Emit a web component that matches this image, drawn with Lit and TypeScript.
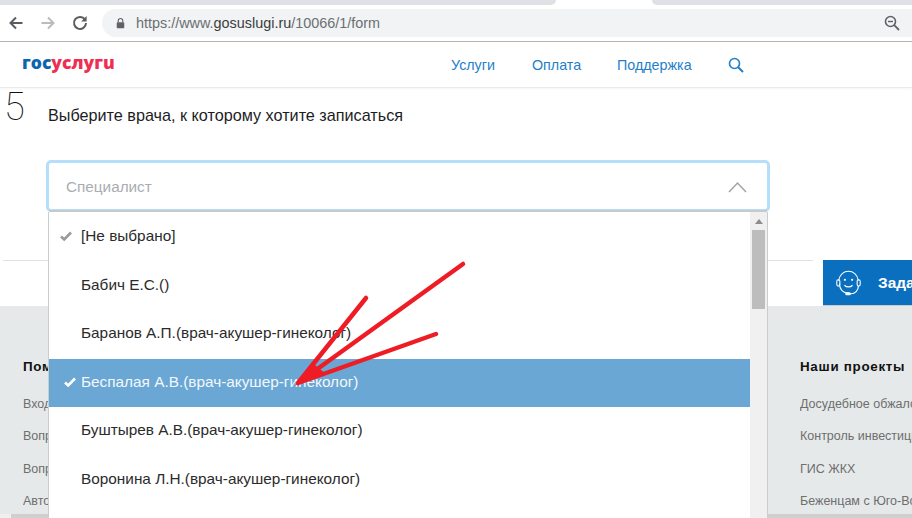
import { LitElement, html, css, svg } from "lit";
import { customElement } from "lit/decorators.js";

const rows = [
  { t: "[Не выбрано]", mark: "grey" },
  { t: "Бабич Е.С.()" },
  { t: "Баранов А.П.(врач-акушер-гинеколог)" },
  { t: "Беспалая А.В.(врач-акушер-гинеколог)", mark: "white", sel: true },
  { t: "Буштырев А.В.(врач-акушер-гинеколог)" },
  { t: "Воронина Л.Н.(врач-акушер-гинеколог)" },
];
const check = svg`<path d="M1 6.5 L4.2 9.5 L11 2.5" fill="none" stroke="currentColor" stroke-width="2.6"/>`;

@customElement("app-root")
export class AppRoot extends LitElement {
  static styles = css`
    :host { display: block; position: relative; width: 912px; height: 518px; overflow: hidden; background: #fff; font-family: "Liberation Sans", Arial, sans-serif; }
    .page { display: flex; flex-direction: column; height: 518px; }
    .tabs { display: flex; height: 9px; flex: none; }
    .tabs i { display: block; height: 5px; background: #dee1e6; }
    .tabs .l { width: 556px; border-bottom-right-radius: 5px; }
    .tabs .sp { width: 96px; flex: none; background: #fff; }
    .tabs .r { flex: 1; border-bottom-left-radius: 5px; }
    .toolbar { flex: none; height: 32px; border-bottom: 1px solid #b4b4b4; display: flex; align-items: flex-start; box-sizing: content-box; }
    .nav { display: flex; width: 102px; height: 28px; flex: none; align-items: center; padding-left: 8px; box-sizing: border-box; gap: 16px; }
    .nav svg { width: 16px; height: 16px; flex: none; }
    .omni { flex: 1; height: 28px; background: #f1f3f4; border-radius: 14px 0 0 14px; display: flex; align-items: center; padding: 0 12px 0 14px; color: #6b6f73; font-size: 14.4px; }
    .omni .lock { width: 9px; height: 12px; margin-right: 11px; flex: none; }
    .omni b { font-weight: 400; color: #3a3d40; }
    .omni .zoom { margin-left: auto; width: 16px; height: 16px; }
    .head { flex: none; height: 45px; border-bottom: 1px solid #eaeaea; box-shadow: 0 1px 2px rgba(0,0,0,.04); display: flex; align-items: center; padding: 0 0 0 22px; }
    .logo { font-family: "Open Sans", sans-serif; font-weight: 800; font-size: 17.5px; color: #ee2f53; width: 429px; flex: none; line-height: 1; margin-top: -3px; }
    .logo span { color: #0d65b0; }
    .links { display: flex; align-items: center; font-size: 14.3px; color: #1f80c9; }
    .links a { display: block; }
    .links a:nth-child(1) { width: 81px; }
    .links a:nth-child(2) { width: 85px; }
    .links a:nth-child(3) { width: 111px; }
    .links svg { width: 16px; height: 16px; display: block; }
    .main { flex: 1; display: flex; flex-direction: column; position: relative; min-height: 0; }
    .step { display: flex; height: 72px; flex: none; padding-left: 4px; }
    .num { font-family: "Roboto", sans-serif; font-weight: 100; font-size: 38px; line-height: 1; width: 44px; color: #111; }
    .ttl { font-size: 16.2px; color: #1d1d1f; margin-top: 18px; }
    .selwrap { position: relative; margin-left: 46px; width: 724px; height: 52px; flex: none; }
    .sel { box-sizing: border-box; height: 52px; border: 3px solid #b5defa; border-radius: 5px; display: flex; align-items: center; justify-content: space-between; padding: 1px 20px 0 17px; color: #a9adb1; font-size: 15.3px; position: relative; }
    .sel::after { content: ""; position: absolute; left: 0; right: 0; bottom: -3px; height: 2px; background: #c9c9c9; }
    .sel svg { width: 19px; height: 12px; }
    .drop { position: absolute; left: 2px; top: 52px; width: 720px; height: 320px; box-sizing: border-box; background: #fff; border-left: 1px solid #c8cdd0; border-right: 1px solid #c8cdd0; display: flex; z-index: 2; }
    .list { flex: 1; min-width: 0; padding-top: 1px; }
    .row { box-sizing: border-box; height: 48.5px; padding-bottom: 2px; display: flex; align-items: center; font-size: 15.35px; color: #2b2b2b; position: relative; padding-left: 32px; }
    .row.sel-row { background: #6aa7d4; color: #f3f7fb; }
    .row svg { position: absolute; left: 11px; top: 50%; margin-top: -7px; width: 12px; height: 12px; }
    .row svg.grey { color: #9a9a9a; }
    .row svg.white { color: #fff; left: 15px; }
    .bar { width: 17px; flex: none; background: #f0f0f0; display: flex; flex-direction: column; align-items: center; }
    .bar .up { width: 0; height: 0; border: 4px solid transparent; border-top: 0; border-bottom: 5px solid #8d8d8d; margin: 7px 0 6px; }
    .bar .thumb { width: 13px; height: 79px; background: #bdbdbd; }
    .contact { display: flex; margin-top: 48px; height: 46px; flex: none; padding-left: 3px; }
    .contact .line { width: 810px; height: 1px; background: #dfe3e3; flex: none; }
    .ask { margin-left: 10px; flex: 1; min-width: 0; height: 45px; background: #0b6fc0; color: #fff; display: flex; align-items: center; padding-left: 12px; font-weight: 700; font-size: 15.4px; gap: 16px; border-bottom: 1px solid #c5cbcb; white-space: nowrap; overflow: hidden; }
    .ask svg { width: 27px; height: 27px; flex: none; }
    .foot { flex: 1; min-height: 0; background: #e5e9e9; display: flex; justify-content: space-between; padding: 53px 0 0 23px; overflow: hidden; font-size: 12.5px; color: #6e6e6e; }
    .col { width: 112px; white-space: nowrap; overflow: hidden; flex: none; display: flex; flex-direction: column; }
    .col h4 { margin: 0 0 20.5px; font-size: 13.4px; line-height: 16px; color: #111; letter-spacing: .7px; font-weight: 700; }
    .col div { height: 32.5px; line-height: 16px; flex: none; }
    .hscroll { flex: none; height: 4px; background: #efefef; padding-left: 11px; }
    .hscroll div { height: 4px; background: #cfcfcf; }
    .arrows { position: absolute; inset: 0; width: 912px; height: 518px; z-index: 5; pointer-events: none; }
  `;

  render() {
    return html`<div class="page">
      <div class="tabs"><i class="l"></i><i class="sp"></i><i class="r"></i></div>
      <div class="toolbar">
        <div class="nav">
          <svg viewBox="0 0 16 16"><path d="M14.5 8H2.5M8 2.5 2.5 8 8 13.5" fill="none" stroke="#5a5d60" stroke-width="2"/></svg>
          <svg viewBox="0 0 16 16"><path d="M1.5 8h12M8 2.5 13.5 8 8 13.5" fill="none" stroke="#b9bbbd" stroke-width="2"/></svg>
          <svg viewBox="0 0 16 16"><path d="M13 4.6A6 6 0 1 0 14 8" fill="none" stroke="#5a5d60" stroke-width="2"/><path d="M14.6 1v5.4H9.2z" fill="#5a5d60"/></svg>
        </div>
        <div class="omni">
          <svg class="lock" viewBox="0 0 12 14"><path d="M3 6V4a3 3 0 0 1 6 0v2" fill="none" stroke="#5f6368" stroke-width="1.5"/><rect x="1" y="6" width="10" height="8" rx="1" fill="#5f6368"/></svg>
          <span>https://www.<b>gosuslugi.ru</b>/10066/1/form</span>
          <svg class="zoom" viewBox="0 0 16 16"><circle cx="6.5" cy="6.5" r="5" fill="none" stroke="#5f6368" stroke-width="1.6"/><path d="M10.2 10.2 15 15" stroke="#5f6368" stroke-width="1.8"/><path d="M4 6.5h5" stroke="#5f6368" stroke-width="1.4"/></svg>
        </div>
      </div>
      <div class="head">
        <div class="logo"><span>гос</span>услугu</div>
        <div class="links"><a>Услуги</a><a>Оплата</a><a>Поддержка</a>
          <svg viewBox="0 0 16 16"><circle cx="6.5" cy="6.5" r="5" fill="none" stroke="#1f80c9" stroke-width="1.6"/><path d="M10.2 10.2 15 15" stroke="#1f80c9" stroke-width="2"/></svg>
        </div>
      </div>
      <div class="main">
        <div class="step"><div class="num">5</div><div class="ttl">Выберите врача, к которому хотите записаться</div></div>
        <div class="selwrap">
          <div class="sel"><span>Специалист</span>
            <svg viewBox="0 0 19 12"><path d="M1 11 9.500 2 18 11" fill="none" stroke="#a3a3a3" stroke-width="1.500"/></svg>
          </div>
          <div class="drop">
            <div class="list">
              ${rows.map((r) => html`<div class="row ${r.sel ? "sel-row" : ""}">
                ${r.mark ? svg`<svg class=${r.mark} viewBox="0 0 12 12">${check}</svg>` : ""}${r.t}</div>`)}
            </div>
            <div class="bar"><div class="up"></div><div class="thumb"></div></div>
          </div>
        </div>
        <div class="contact"><div class="line"></div>
          <div class="ask">
            <svg viewBox="0 0 30 30" fill="none" stroke="#fff" stroke-width="1.200">
              <path d="M4 13C5 6 10 2.500 15 2.500S25 6 26 13"/><path d="M5 16c0 7 4 11 10 11"/>
              <rect x="2" y="12" width="3.400" height="7" rx="1.700"/><rect x="24.600" y="12" width="3.400" height="7" rx="1.700"/>
              <path d="M26 19c0 5-4 8.500-8 8.500h-3" stroke-width="1.300"/><rect x="12" y="26.400" width="5" height="2.200" rx="1.100" fill="#fff"/>
              <circle cx="11" cy="12" r="1.200" fill="#fff" stroke="none"/><circle cx="19" cy="12" r="1.200" fill="#fff" stroke="none"/>
              <path d="M10.500 18c2.500 2.500 6.500 2.500 9 0" stroke-width="1.400"/>
            </svg>
            <span>Задать вопрос</span>
          </div>
        </div>
        <div class="foot">
          <div class="col"><h4>Помощь</h4><div>Вход</div><div>Вопросы</div><div>Вопросы</div><div>Авто</div></div>
          <div class="col"><h4>Наши проекты</h4><div>Досудебное обжалование</div><div>Контроль инвестиций</div><div>ГИС ЖКХ</div><div>Беженцам с Юго-Востока</div></div>
        </div>
      </div>
      <div class="hscroll"><div></div></div>
    </div>
    <svg class="arrows" viewBox="0 0 912 518" fill="none" stroke="#ee1c25" stroke-width="4.500" stroke-linecap="round">
      <path d="M298 383 463 264M298 383 366 298M298 383 436 334"/>
      <path d="M298 383 312 364 322 372z" fill="#ee1c25" stroke-width="2"/>
    </svg>`;
  }
}
